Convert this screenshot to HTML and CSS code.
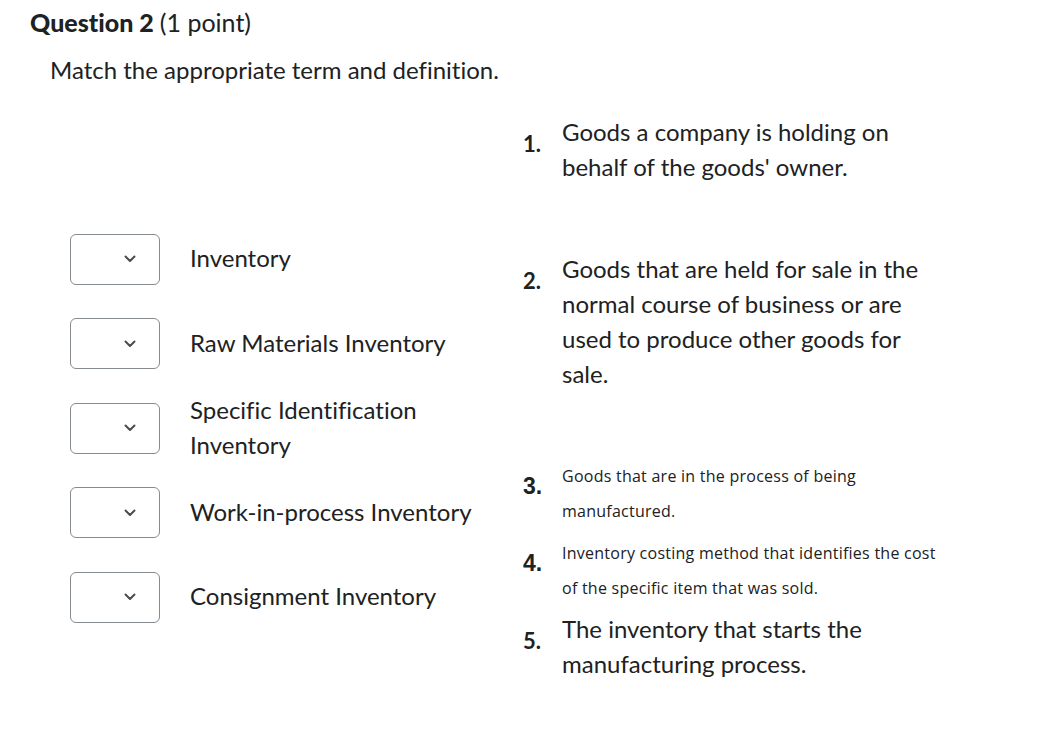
FILE: index.html
```html
<!DOCTYPE html>
<html lang="en">
<head>
<meta charset="utf-8">
<title>Question 2</title>
<link rel="stylesheet" href="styles.css">
</head>
<body>
<div class="page">
  <h2 class="q-title"><strong>Question 2</strong> <span class="q-points">(1 point)</span></h2>
  <p class="q-prompt">Match the appropriate term and definition.</p>
  <div class="match">
    <div class="terms">
      <div class="term-row">
        <div class="select"><svg class="chev" width="12" height="8" viewBox="0 0 12 8"><path d="M1.5 1.5 L6 6 L10.5 1.5" fill="none" stroke="#494c4e" stroke-width="2" stroke-linecap="round" stroke-linejoin="round"/></svg></div>
        <div class="term">Inventory</div>
      </div>
      <div class="term-row">
        <div class="select"><svg class="chev" width="12" height="8" viewBox="0 0 12 8"><path d="M1.5 1.5 L6 6 L10.5 1.5" fill="none" stroke="#494c4e" stroke-width="2" stroke-linecap="round" stroke-linejoin="round"/></svg></div>
        <div class="term">Raw Materials Inventory</div>
      </div>
      <div class="term-row">
        <div class="select"><svg class="chev" width="12" height="8" viewBox="0 0 12 8"><path d="M1.5 1.5 L6 6 L10.5 1.5" fill="none" stroke="#494c4e" stroke-width="2" stroke-linecap="round" stroke-linejoin="round"/></svg></div>
        <div class="term">Specific Identification Inventory</div>
      </div>
      <div class="term-row">
        <div class="select"><svg class="chev" width="12" height="8" viewBox="0 0 12 8"><path d="M1.5 1.5 L6 6 L10.5 1.5" fill="none" stroke="#494c4e" stroke-width="2" stroke-linecap="round" stroke-linejoin="round"/></svg></div>
        <div class="term">Work-in-process Inventory</div>
      </div>
      <div class="term-row">
        <div class="select"><svg class="chev" width="12" height="8" viewBox="0 0 12 8"><path d="M1.5 1.5 L6 6 L10.5 1.5" fill="none" stroke="#494c4e" stroke-width="2" stroke-linecap="round" stroke-linejoin="round"/></svg></div>
        <div class="term">Consignment Inventory</div>
      </div>
    </div>
    <div class="defs">
      <div class="def def-1">
        <div class="num">1.</div>
        <div class="text">Goods a company is holding on behalf of the goods' owner.</div>
      </div>
      <div class="def def-2">
        <div class="num">2.</div>
        <div class="text">Goods that are held for sale in the normal course of business or are used to produce other goods for sale.</div>
      </div>
      <div class="def def-3">
        <div class="num num-alt">3.</div>
        <div class="text text-small">Goods that are in the process of being manufactured.</div>
      </div>
      <div class="def def-4">
        <div class="num num-alt">4.</div>
        <div class="text text-small">Inventory costing method that identifies the cost of the specific item that was sold.</div>
      </div>
      <div class="def def-5">
        <div class="num">5.</div>
        <div class="text">The inventory that starts the manufacturing process.</div>
      </div>
    </div>
  </div>
</div>
</body>
</html>
```

FILE: styles.css
```css
html, body {
  margin: 0;
  padding: 0;
  background: #ffffff;
}

body {
  font-family: Lato, "Open Sans", sans-serif;
  color: #202122;
  font-variant-ligatures: none;
}

.page {
  padding: 7px 0 0 30px;
}

.q-title {
  margin: 0;
  font-size: 25px;
  line-height: 30px;
  font-weight: 700;
}

.q-points {
  font-weight: 400;
}

.q-prompt {
  margin: 15px 0 0 20px;
  font-size: 24px;
  line-height: 35px;
}

.match {
  display: flex;
  margin: 27px 0 0 40px;
}

.terms {
  margin-top: 103px;
  width: 453px;
  display: flex;
  flex-direction: column;
}

.term-row {
  display: flex;
  align-items: center;
  height: 84.5px;
}

.select {
  width: 90px;
  height: 51px;
  box-sizing: border-box;
  border: 1px solid #868b8f;
  border-radius: 6px;
  display: flex;
  align-items: center;
  justify-content: flex-end;
  padding-right: 23px;
  flex-shrink: 0;
}

.chev {
  display: block;
}

.term {
  margin-left: 30px;
  width: 300px;
  font-size: 24px;
  line-height: 35px;
  padding-bottom: 3px;
}

.defs {
  display: flex;
  flex-direction: column;
}

.def {
  display: grid;
  grid-template-columns: 39px 380px;
}

.def-2 { margin-top: 67px; }
.def-3 { margin-top: 68px; }
.def-4 { margin-top: 7px; }
.def-5 { margin-top: 5px; }

.num {
  font-weight: 700;
  font-size: 22px;
  line-height: 35px;
  padding-top: 12px;
}

.num-alt {
  font-family: "Liberation Sans", Arial, sans-serif;
  font-size: 23px;
  padding-top: 10px;
}

.text {
  font-size: 24px;
  line-height: 35px;
}

.text-small {
  font-family: "Open Sans", "Noto Sans", sans-serif;
  font-size: 16px;
  letter-spacing: 0.25px;
  line-height: 35px;
}
```
